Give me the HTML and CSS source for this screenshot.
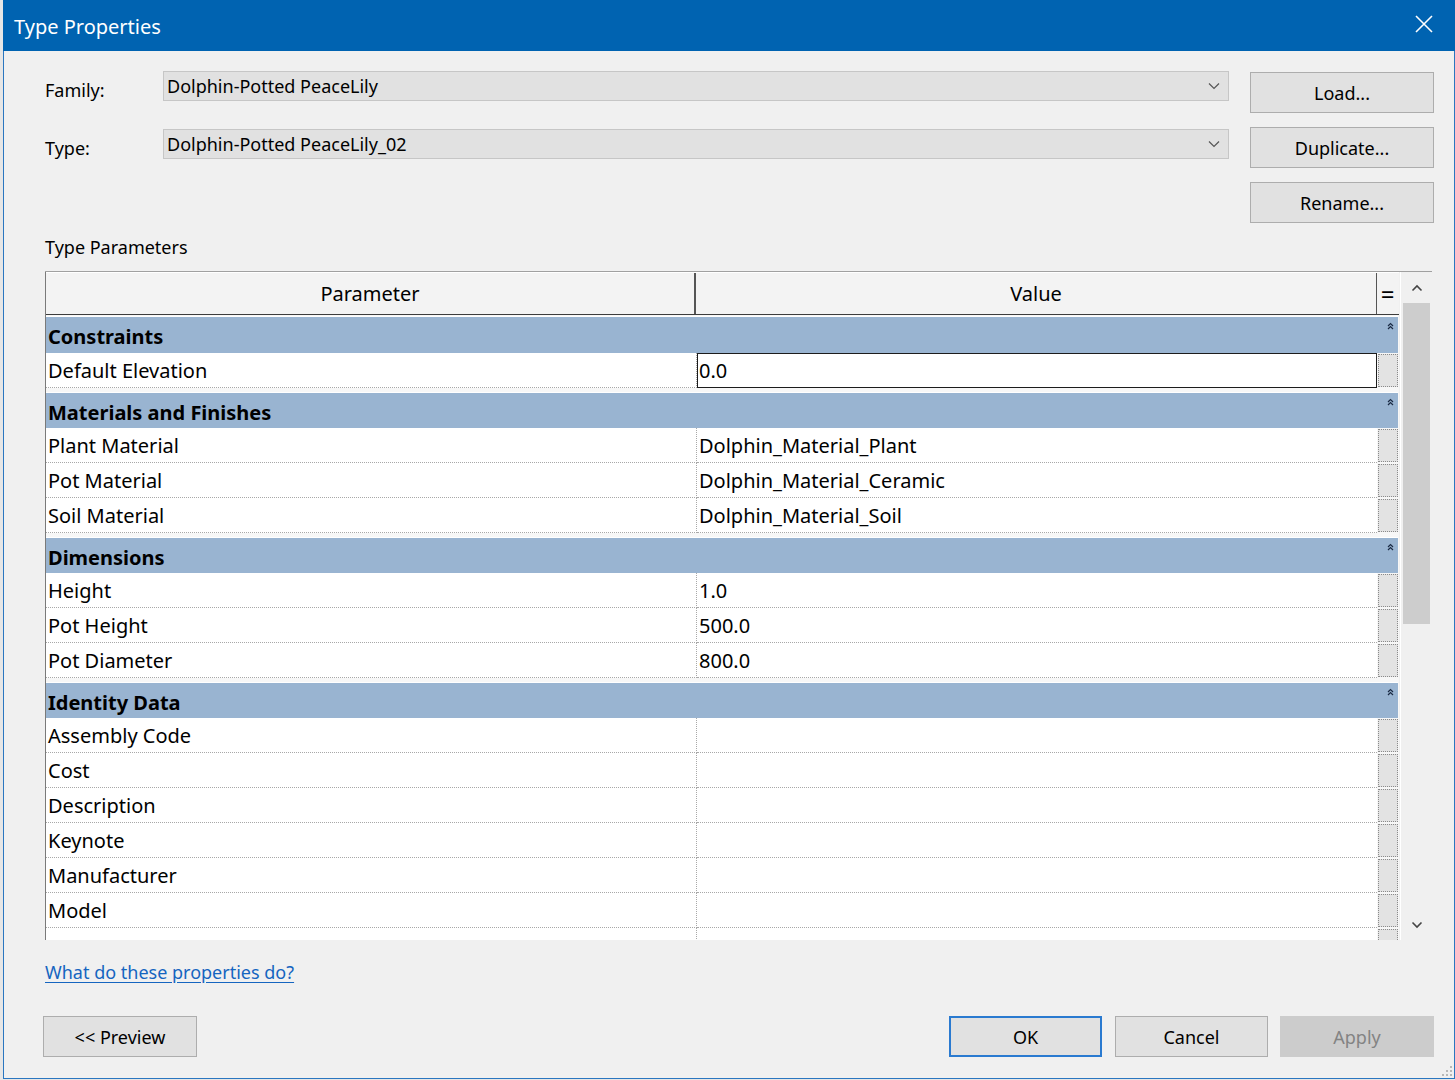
FILE: index.html
```html
<!DOCTYPE html>
<html>
<head>
<meta charset="utf-8">
<link rel="stylesheet" href="styles.css">
</head>
<body>
<div class="dialog">
  <div class="titlebar">
    <span class="title">Type Properties</span>
    <svg class="close" width="18" height="18" viewBox="0 0 18 18"><path d="M1 1 L17 17 M17 1 L1 17" stroke="#fff" stroke-width="1.6" fill="none"/></svg>
  </div>
  <div class="content">
    <div class="top">
      <div class="fields">
        <div class="field">
          <span class="label">Family:</span>
          <div class="combo"><span>Dolphin-Potted PeaceLily</span>
            <svg class="chev" width="12" height="8" viewBox="0 0 12 8"><path d="M1 1.5 L6 6.5 L11 1.5" stroke="#555" stroke-width="1.2" fill="none"/></svg>
          </div>
        </div>
        <div class="field field2">
          <span class="label">Type:</span>
          <div class="combo"><span>Dolphin-Potted PeaceLily_02</span>
            <svg class="chev" width="12" height="8" viewBox="0 0 12 8"><path d="M1 1.5 L6 6.5 L11 1.5" stroke="#555" stroke-width="1.2" fill="none"/></svg>
          </div>
        </div>
      </div>
      <div class="buttons">
        <div class="btn side">Load...</div>
        <div class="btn side">Duplicate...</div>
        <div class="btn side">Rename...</div>
      </div>
    </div>
    <div class="section-label">Type Parameters</div>
    <div class="grid-wrap">
      <div class="grid">
        <div class="hdr">
          <div class="hcell c1">Parameter</div>
          <div class="hcell c2">Value</div>
          <div class="hcell c3">=</div>
        </div>

        <div class="group first"><span>Constraints</span><svg class="gicon" width="7" height="8" viewBox="0 0 7 8"><path d="M1 4 L3.5 1.5 L6 4 M1 7 L3.5 4.5 L6 7" stroke="#1a2a44" stroke-width="1.2" fill="none"/></svg></div>
        <div class="row"><div class="cell c1">Default Elevation</div><div class="cell c2 edit">0.0</div><div class="cell c3"><div class="eqbtn"></div></div></div>

        <div class="group"><span>Materials and Finishes</span><svg class="gicon" width="7" height="8" viewBox="0 0 7 8"><path d="M1 4 L3.5 1.5 L6 4 M1 7 L3.5 4.5 L6 7" stroke="#1a2a44" stroke-width="1.2" fill="none"/></svg></div>
        <div class="row"><div class="cell c1">Plant Material</div><div class="cell c2">Dolphin_Material_Plant</div><div class="cell c3"><div class="eqbtn"></div></div></div>
        <div class="row"><div class="cell c1">Pot Material</div><div class="cell c2">Dolphin_Material_Ceramic</div><div class="cell c3"><div class="eqbtn"></div></div></div>
        <div class="row"><div class="cell c1">Soil Material</div><div class="cell c2">Dolphin_Material_Soil</div><div class="cell c3"><div class="eqbtn"></div></div></div>

        <div class="group"><span>Dimensions</span><svg class="gicon" width="7" height="8" viewBox="0 0 7 8"><path d="M1 4 L3.5 1.5 L6 4 M1 7 L3.5 4.5 L6 7" stroke="#1a2a44" stroke-width="1.2" fill="none"/></svg></div>
        <div class="row"><div class="cell c1">Height</div><div class="cell c2">1.0</div><div class="cell c3"><div class="eqbtn"></div></div></div>
        <div class="row"><div class="cell c1">Pot Height</div><div class="cell c2">500.0</div><div class="cell c3"><div class="eqbtn"></div></div></div>
        <div class="row"><div class="cell c1">Pot Diameter</div><div class="cell c2">800.0</div><div class="cell c3"><div class="eqbtn"></div></div></div>

        <div class="group"><span>Identity Data</span><svg class="gicon" width="7" height="8" viewBox="0 0 7 8"><path d="M1 4 L3.5 1.5 L6 4 M1 7 L3.5 4.5 L6 7" stroke="#1a2a44" stroke-width="1.2" fill="none"/></svg></div>
        <div class="row"><div class="cell c1">Assembly Code</div><div class="cell c2"></div><div class="cell c3"><div class="eqbtn"></div></div></div>
        <div class="row"><div class="cell c1">Cost</div><div class="cell c2"></div><div class="cell c3"><div class="eqbtn"></div></div></div>
        <div class="row"><div class="cell c1">Description</div><div class="cell c2"></div><div class="cell c3"><div class="eqbtn"></div></div></div>
        <div class="row"><div class="cell c1">Keynote</div><div class="cell c2"></div><div class="cell c3"><div class="eqbtn"></div></div></div>
        <div class="row"><div class="cell c1">Manufacturer</div><div class="cell c2"></div><div class="cell c3"><div class="eqbtn"></div></div></div>
        <div class="row"><div class="cell c1">Model</div><div class="cell c2"></div><div class="cell c3"><div class="eqbtn"></div></div></div>
        <div class="row"><div class="cell c1"></div><div class="cell c2"></div><div class="cell c3"><div class="eqbtn"></div></div></div>
      </div>
      <div class="scrollbar">
        <div class="sarrow"><svg width="12" height="8" viewBox="0 0 12 8"><path d="M1.5 6.5 L6 2 L10.5 6.5" stroke="#444" stroke-width="1.6" fill="none"/></svg></div>
        <div class="strack"><div class="sthumb"></div></div>
        <div class="sarrow"><svg width="12" height="8" viewBox="0 0 12 8"><path d="M1.5 1.5 L6 6 L10.5 1.5" stroke="#444" stroke-width="1.6" fill="none"/></svg></div>
      </div>
    </div>
    <div class="linkrow"><a class="link">What do these properties do?</a></div>
    <div class="bottom">
      <div class="btn foot">&lt;&lt; Preview</div>
      <div class="spacer"></div>
      <div class="btn foot ok">OK</div>
      <div class="btn foot cancel">Cancel</div>
      <div class="btn foot disabled">Apply</div>
    </div>
    <svg class="grip" width="14" height="14" viewBox="0 0 14 14">
      <rect x="10" y="2" width="2" height="2" fill="#b8b8b8"/>
      <rect x="6" y="6" width="2" height="2" fill="#b8b8b8"/><rect x="10" y="6" width="2" height="2" fill="#b8b8b8"/>
      <rect x="2" y="10" width="2" height="2" fill="#b8b8b8"/><rect x="6" y="10" width="2" height="2" fill="#b8b8b8"/><rect x="10" y="10" width="2" height="2" fill="#b8b8b8"/>
    </svg>
  </div>
</div>
</body>
</html>
```

FILE: styles.css
```css
html, body {
  margin: 0;
  padding: 0;
}
body {
  background: #e6e6e6;
  font-family: "Noto Sans", "Open Sans", sans-serif;
  color: #000;
  width: 1455px;
  height: 1080px;
  overflow: hidden;
}
.dialog {
  margin-left: 3px;
  width: 1450px;
  height: 1078px;
  border-left: 1px solid #2a76c0;
  border-right: 1px solid #2a76c0;
  border-bottom: 1px solid #2a76c0;
  background: #f0f0f0;
  display: flex;
  flex-direction: column;
}
.titlebar {
  height: 51px;
  background: #0063b1;
  display: flex;
  align-items: center;
  justify-content: space-between;
  padding-left: 11px;
  padding-right: 22px;
  margin-left: -1px;
  margin-right: -1px;
}
.title {
  color: #fff;
  font-size: 20px;
  margin-top: 1px;
}
.close {
  margin-top: -3px;
}
.content {
  position: relative;
  flex: 1;
  padding-left: 41px;
  padding-right: 20px;
}
.top {
  display: flex;
  padding-top: 20px;
}
.fields {
  width: 1184px;
}
.field {
  display: flex;
  align-items: center;
  height: 30px;
}
.field2 {
  margin-top: 28px;
}
.label {
  width: 119px;
  font-size: 18px;
  padding-top: 7px;
}
.combo {
  width: 1062px;
  height: 28px;
  background: #e1e1e1;
  border: 1px solid #c6c6c6;
  display: flex;
  align-items: center;
  justify-content: space-between;
  padding-left: 3px;
  padding-right: 8px;
  box-sizing: content-box;
  font-size: 18px;
}
.buttons {
  margin-left: 21px;
  margin-top: 1px;
  display: flex;
  flex-direction: column;
  gap: 14px;
}
.btn {
  background: #e1e1e1;
  border: 1px solid #adadad;
  display: flex;
  align-items: center;
  justify-content: center;
  font-size: 18px;
  box-sizing: border-box;
}
.side {
  width: 184px;
  height: 41px;
}
.section-label {
  font-size: 18px;
  margin-top: 12px;
  height: 24px;
  line-height: 24px;
}
.grid-wrap {
  margin-top: 12px;
  width: 1387px;
  height: 669px;
  display: flex;
  border-top: 1px solid #a0a0a0;
  box-sizing: border-box;
}
.grid {
  width: 1354px;
  height: 668px;
  overflow: hidden;
  border-left: 1px solid #7a7a7a;
  box-sizing: border-box;
  background: #f7f7f7;
}
.hdr {
  display: flex;
  height: 41px;
  background: #f3f3f3;
  border-bottom: 1px solid #3c3c3c;
  border-top: 1px solid #ffffff;
}
.hcell {
  display: flex;
  align-items: center;
  justify-content: center;
  font-size: 20px;
  box-sizing: border-box;
}
.hcell.c1 { width: 650px; border-right: 2px solid #555; }
.hcell.c2 { width: 681px; border-right: 1px solid #555; }
.hcell.c3 { width: 21px; font-size: 24px; }
.group {
  margin-top: 4px;
  height: 36px;
  background: #99b4d1;
  display: flex;
  align-items: center;
  justify-content: space-between;
  padding-left: 2px;
  width: 1352px;
  box-sizing: border-box;
  font-weight: bold;
  font-size: 20px;
  border-top: 1px solid #ffffff;
}
.group.first { margin-top: 1px; height: 37px; }
.group span {
  margin-top: 3px;
}
.gicon {
  align-self: flex-start;
  margin-top: 5px;
  margin-right: 4px;
}
.row {
  display: flex;
  height: 35px;
  width: 1352px;
}
.cell {
  background: #fff;
  height: 35px;
  box-sizing: border-box;
  border-bottom: 1px dotted #a8a8a8;
  font-size: 20px;
  display: flex;
  align-items: center;
  white-space: nowrap;
}
.cell.c1 {
  width: 651px;
  padding-left: 2px;
  border-right: 1px dotted #a8a8a8;
}
.cell.c2 {
  width: 680px;
  padding-left: 2px;
}
.cell.edit {
  border: 1px solid #1c1c1c;
  padding-left: 1px;
}
.cell.c3 {
  width: 21px;
  background: #f7f7f7;
  border-bottom: none;
  padding: 1px 0 1px 1px;
}
.eqbtn {
  width: 20px;
  height: 33px;
  background: #e3e3e3;
  border: 1px dotted #8a8a8a;
  box-sizing: border-box;
}
.scrollbar {
  width: 31px;
  margin-left: 1px;
  height: 668px;
  background: #f0f0f0;
  display: flex;
  flex-direction: column;
  border-left: 1px solid #ffffff;
}
.sarrow {
  height: 31px;
  display: flex;
  align-items: center;
  justify-content: center;
}
.strack {
  flex: 1;
  padding: 0 2px;
}
.sthumb {
  height: 321px;
  background: #cdcdcd;
}
.linkrow {
  margin-top: 19px;
  height: 26px;
  line-height: 26px;
}
.link {
  font-size: 18px;
  color: #1565c0;
  text-decoration: underline;
  text-underline-offset: 3px;
}
.bottom {
  display: flex;
  margin-top: 31px;
  margin-left: -2px;
  gap: 12px;
}
.foot {
  width: 154px;
  height: 41px;
}
.spacer {
  flex: 1;
}
.ok {
  border: 2px solid #2a7ad0;
  width: 153px;
}
.cancel {
  margin-left: 1px;
  width: 153px;
}
.disabled {
  background: #cccccc;
  border-color: #cccccc;
  color: #838383;
}
.grip {
  position: absolute;
  right: 0;
  bottom: 0;
}
```
